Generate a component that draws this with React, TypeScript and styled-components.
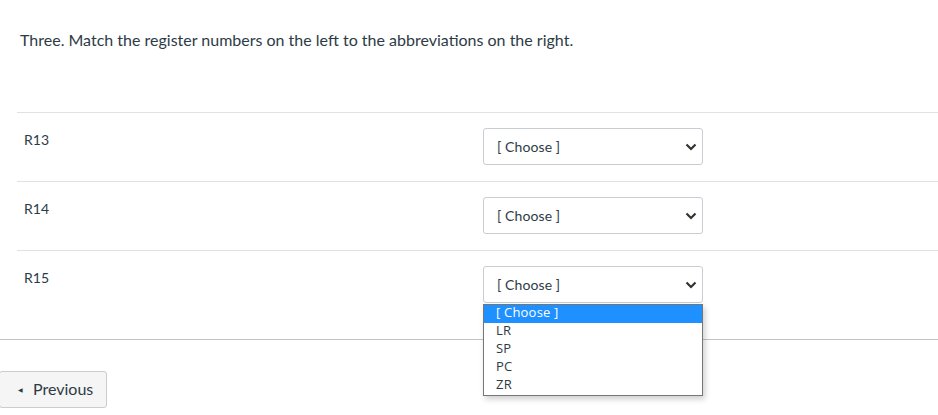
import styled, { createGlobalStyle } from "styled-components";

const GlobalStyle = createGlobalStyle`
  html, body {
    margin: 0;
    padding: 0;
    background: #ffffff;
  }
  body {
    font-family: Lato, "Noto Sans", sans-serif;
    color: #2d3b45;
  }
`;

const Page = styled.div`
  width: 938px;
  height: 415px;
  overflow: hidden;
`;

const Question = styled.p`
  margin: 0;
  padding: 30px 20px 62px;
  font-size: 16px;
  line-height: 20px;
`;

const Answers = styled.div`
  margin-left: 17px;
`;

const Row = styled.div`
  display: flex;
  align-items: flex-start;
  border-top: 1px solid #e1e1e1;
  padding: 15px 0 16px 7px;
`;

const Label = styled.div`
  width: 459px;
  margin-top: 2px;
  font-size: 14px;
  line-height: 20px;
`;

const SelectWrap = styled.div`
  position: relative;
`;

const Select = styled.div`
  box-sizing: border-box;
  width: 220px;
  height: 37px;
  border: 1px solid #c7cdd1;
  border-radius: 3px;
  background: #fff;
  display: flex;
  align-items: center;
  justify-content: space-between;
  padding: 0 5px 1px 13px;
  font-size: 14px;
  letter-spacing: 0.1px;
`;

const Chevron = styled.svg`
  width: 12px;
  height: 8px;
  margin-top: 1px;
`;

const ListBox = styled.ul`
  position: absolute;
  top: 38px;
  left: 0;
  box-sizing: border-box;
  width: 220px;
  margin: 0;
  padding: 0;
  list-style: none;
  background: #fff;
  border: 1px solid #767676;
  box-shadow: 2px 3px 6px rgba(0, 0, 0, 0.2);
  font-family: "Open Sans", "Noto Sans", sans-serif;
  font-size: 13px;
  letter-spacing: 0.2px;
  z-index: 2;
`;

const Option = styled.li<{ $active?: boolean }>`
  height: 18px;
  line-height: 14px;
  padding-left: 12px;
  background: ${(p) => (p.$active ? "#1e90ff" : "transparent")};
  color: ${(p) => (p.$active ? "#fff" : "#2d3b45")};
`;

const Footer = styled.div`
  margin-top: 20px;
  border-top: 1px solid #bfc4c8;
  padding-top: 31px;
`;

const PrevButton = styled.button`
  box-sizing: border-box;
  height: 37px;
  width: 108px;
  margin-left: -1px;
  display: flex;
  align-items: center;
  gap: 10px;
  padding: 0 0 2px 18px;
  background: #f5f5f5;
  border: 1px solid #c7cdd1;
  border-radius: 3px;
  font-family: Lato, "Noto Sans", sans-serif;
  font-size: 16px;
  color: #2d3b45;
`;

const Caret = styled.span`
  font-size: 6px;
  line-height: 1;
  margin-top: 2px;
`;

const options = ["[ Choose ]", "LR", "SP", "PC", "ZR"];

function ChoiceSelect({ open }: { open?: boolean }) {
  return (
    <SelectWrap>
      <Select>
        <span>[ Choose ]</span>
        <Chevron viewBox="0 0 12 8">
          <path
            d="M1.5 1.5 L6 6 L10.5 1.5"
            fill="none"
            stroke="#333"
            strokeWidth="2.2"
          />
        </Chevron>
      </Select>
      {open && (
        <ListBox>
          {options.map((o, i) => (
            <Option key={o} $active={i === 0}>
              {o}
            </Option>
          ))}
        </ListBox>
      )}
    </SelectWrap>
  );
}

export default function App() {
  const registers = ["R13", "R14", "R15"];
  return (
    <Page>
      <GlobalStyle />
      <Question>
        Three. Match the register numbers on the left to the abbreviations on
        the right.
      </Question>
      <Answers>
        {registers.map((r, i) => (
          <Row key={r}>
            <Label>{r}</Label>
            <ChoiceSelect open={i === registers.length - 1} />
          </Row>
        ))}
      </Answers>
      <Footer>
        <PrevButton>
          <Caret>◀</Caret>
          Previous
        </PrevButton>
      </Footer>
    </Page>
  );
}
